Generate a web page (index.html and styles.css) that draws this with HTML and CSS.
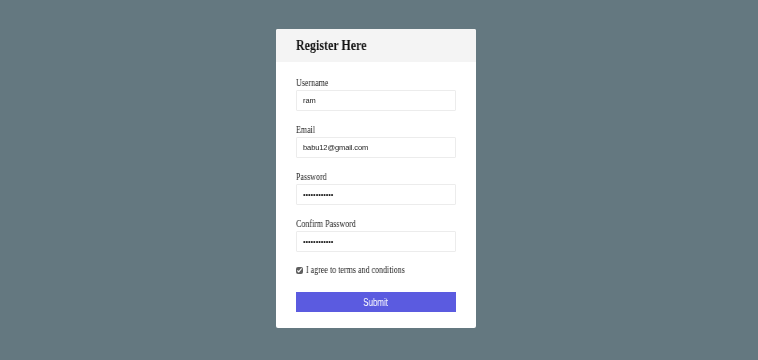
FILE: index.html
```html
<!DOCTYPE html>
<html>
<head>
<meta charset="utf-8">
<link rel="stylesheet" href="styles.css">
</head>
<body>
<div class="page">
  <div class="card">
    <div class="card-head"><h1 class="title"><span class="narrow">Register Here</span></h1></div>
    <form class="card-body">
      <div class="field">
        <label class="label"><span class="narrow">Username</span></label>
        <input class="input" type="text" value="ram">
      </div>
      <div class="field">
        <label class="label"><span class="narrow">Email</span></label>
        <input class="input" type="text" value="babu12@gmail.com">
      </div>
      <div class="field">
        <label class="label"><span class="narrow">Password</span></label>
        <input class="input" type="password" value="123456789012">
      </div>
      <div class="field">
        <label class="label"><span class="narrow">Confirm Password</span></label>
        <input class="input" type="password" value="123456789012">
      </div>
      <label class="check"><input class="checkbox" type="checkbox" checked><span class="narrow">I agree to terms and conditions</span></label>
      <button class="submit" type="button"><span class="narrow center">Submit</span></button>
    </form>
  </div>
</div>
</body>
</html>
```
FILE: styles.css
```css
html, body {
  margin: 0;
  padding: 0;
  background: #647880;
  height: 100%;
}
.page {
  padding: 29px 0 0 276px;
}
.card {
  width: 200px;
  background: #ffffff;
  border-radius: 2px;
  overflow: hidden;
  font-family: "Liberation Serif", "Times New Roman", serif;
}
.narrow {
  display: inline-block;
  white-space: nowrap;
  transform: scaleX(0.8);
  transform-origin: left center;
  will-change: transform;
}
.narrow.center {
  transform-origin: center center;
}
.card-head {
  height: 33px;
  background: #f4f4f4;
  padding: 0 20px;
  display: flex;
  align-items: center;
}
.title {
  margin: 0;
  font-size: 15px;
  font-weight: bold;
  color: #111;
  line-height: 1;
}
.card-body {
  padding: 15px 20px 16px;
  display: flex;
  flex-direction: column;
}
.field {
  display: flex;
  flex-direction: column;
  margin-bottom: 13px;
}
.label {
  font-size: 10px;
  line-height: 12px;
  color: #1e1e1e;
  margin-bottom: 1px;
}
.input {
  box-sizing: border-box;
  width: 160px;
  height: 21px;
  margin: 0;
  border: 1px solid #ececec;
  border-radius: 1px;
  padding: 0 6px;
  font-family: "Liberation Sans", Arial, sans-serif;
  font-size: 7.5px;
  letter-spacing: -0.1px;
  color: #222;
  background: #fff;
  outline: none;
  will-change: transform;
}
.check {
  display: flex;
  align-items: center;
  font-size: 10px;
  line-height: 12px;
  color: #1e1e1e;
  margin-top: -3px;
  height: 16px;
}
.checkbox {
  width: 7px;
  height: 7px;
  margin: 0 3px 0 0;
  accent-color: #5f5f5f;
}
.submit {
  margin-top: 14px;
  width: 160px;
  height: 20px;
  border: none;
  border-radius: 0;
  background: #5b5be0;
  color: #fff;
  font-family: "Liberation Sans", Arial, sans-serif;
  font-size: 10px;
  padding: 0;
}
```
